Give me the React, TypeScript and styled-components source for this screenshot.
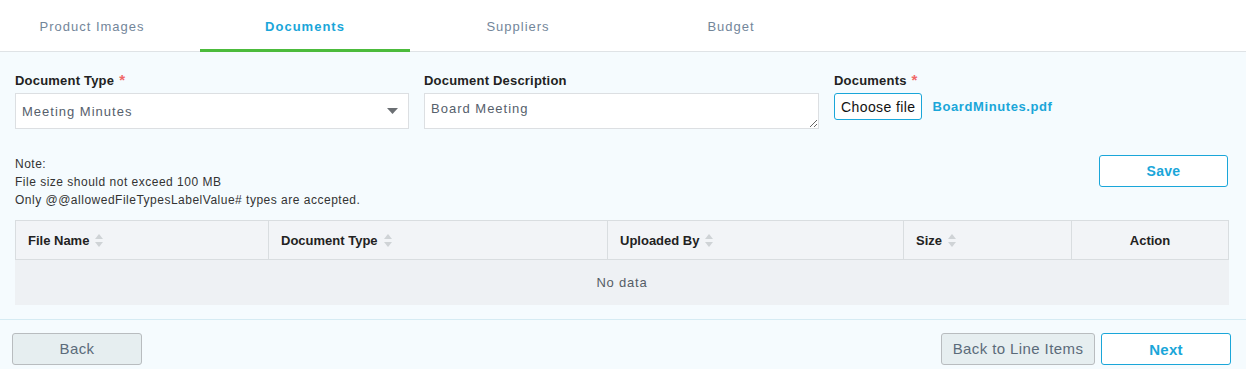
import styled, { createGlobalStyle } from "styled-components";

const GlobalStyle = createGlobalStyle`
  body {
    margin: 0;
    font-family: "Liberation Sans", Arial, sans-serif;
    background: #f5fbfe;
  }
  * {
    box-sizing: border-box;
  }
`;

const Page = styled.div`
  width: 1246px;
  height: 369px;
  overflow: hidden;
  background: #f5fbfe;
`;

const TabBar = styled.div`
  display: flex;
  gap: 3px;
  height: 52px;
  background: #ffffff;
  border-bottom: 1px solid #dfe3e6;
  margin-left: -13px;
`;

const Tab = styled.div<{ $active?: boolean }>`
  width: 210px;
  display: flex;
  align-items: center;
  justify-content: center;
  padding-top: 3px;
  font-size: 13px;
  letter-spacing: 1px;
  font-weight: ${(p) => (p.$active ? "bold" : "normal")};
  color: ${(p) => (p.$active ? "#1aa6d9" : "#73869a")};
  border-bottom: 3px solid ${(p) => (p.$active ? "#4cbb3c" : "transparent")};
  margin-bottom: -1px;
`;

const Body = styled.div`
  padding: 20px 15px 14px;
  border-bottom: 1px solid #d5ebf3;
`;

const FieldRow = styled.div`
  display: grid;
  grid-template-columns: 394px 395px 1fr;
  gap: 15px;
`;

const Field = styled.div`
  display: flex;
  flex-direction: column;
`;

const Label = styled.div`
  height: 18px;
  font-size: 13px;
  font-weight: bold;
  letter-spacing: 0.2px;
  color: #222;
  line-height: 18px;
  margin-bottom: 3px;
`;

const Required = styled.span`
  color: #f06868;
  font-size: 15px;
  line-height: 0;
  margin-left: 5px;
`;

const SelectBox = styled.div`
  height: 36px;
  width: 394px;
  background: #fff;
  border: 1px solid #dcdfe2;
  display: flex;
  align-items: center;
  justify-content: space-between;
  padding: 0 10px 0 6px;
  font-size: 13px;
  letter-spacing: 1px;
  color: #56606c;
`;

const TextArea = styled.textarea`
  height: 36px;
  width: 395px;
  background: #fff;
  border: 1px solid #dcdfe2;
  border-radius: 0;
  padding: 7px 6px;
  font-family: "Liberation Sans", Arial, sans-serif;
  font-size: 13px;
  letter-spacing: 1px;
  color: #56606c;
  resize: both;
  outline: none;
`;

const FileRow = styled.div`
  display: flex;
  align-items: center;
  gap: 10px;
  height: 27px;
`;

const FileButton = styled.button`
  height: 27px;
  padding: 0 6px;
  background: #fff;
  border: 1px solid #1aa6d9;
  border-radius: 3px;
  font-family: "Liberation Sans", Arial, sans-serif;
  font-size: 14px;
  letter-spacing: 0.4px;
  color: #111;
`;

const FileName = styled.span`
  font-size: 13px;
  font-weight: bold;
  letter-spacing: 0.6px;
  color: #1aa6d9;
`;

const NoteRow = styled.div`
  display: flex;
  justify-content: space-between;
  align-items: flex-start;
  margin-top: 26px;
`;

const Note = styled.div`
  font-size: 12px;
  letter-spacing: 0.5px;
  line-height: 18px;
  color: #333;
`;

const OutlineButton = styled.button<{ $w: number; $size: number }>`
  width: ${(p) => p.$w}px;
  height: 32px;
  background: #fff;
  border: 1px solid #1aa6d9;
  border-radius: 3px;
  font-family: "Liberation Sans", Arial, sans-serif;
  font-weight: bold;
  font-size: ${(p) => p.$size}px;
  letter-spacing: 0.3px;
  color: #1aa6d9;
`;

const SaveButton = styled(OutlineButton)`
  margin-right: 3px;
`;

const Table = styled.div`
  margin-top: 11px;
  width: 1214px;
`;

const HeadRow = styled.div`
  display: grid;
  grid-template-columns: 252px 339px 296px 168px 1fr;
  height: 40px;
  background: #f2f4f7;
  border: 1px solid #d9dde0;
`;

const HeadCell = styled.div<{ $center?: boolean }>`
  display: flex;
  align-items: center;
  justify-content: ${(p) => (p.$center ? "center" : "flex-start")};
  gap: 6px;
  padding-left: ${(p) => (p.$center ? "0" : "12px")};
  border-left: 1px solid #d9dde0;
  font-size: 13px;
  font-weight: bold;
  color: #222;
  &:first-child {
    border-left: none;
  }
`;

const EmptyRow = styled.div`
  height: 45px;
  background: #eef1f4;
  display: flex;
  align-items: center;
  justify-content: center;
  font-size: 13px;
  letter-spacing: 0.8px;
  color: #555d66;
`;

const Footer = styled.div`
  display: flex;
  align-items: center;
  padding: 13px 15px 0 12px;
  gap: 6px;
`;

const Spacer = styled.div`
  flex: 1;
`;

const GreyButton = styled.button<{ $w: number }>`
  width: ${(p) => p.$w}px;
  height: 32px;
  padding-bottom: 2px;
  background: #e6eef0;
  border: 1px solid #b8bcbf;
  border-radius: 3px;
  font-family: "Liberation Sans", Arial, sans-serif;
  font-size: 15px;
  letter-spacing: 0.4px;
  color: #5b6b7a;
`;

const SortIcon = () => (
  <svg width="8" height="13" viewBox="0 0 8 13">
    <path d="M4 0 L8 5 L0 5 Z" fill="#cfd3d6" />
    <path d="M0 8 L8 8 L4 13 Z" fill="#cfd3d6" />
  </svg>
);

const Caret = () => (
  <svg width="11" height="6" viewBox="0 0 11 6">
    <path d="M0 0 L11 0 L5.5 6 Z" fill="#6b6f73" />
  </svg>
);

const columns = [
  { name: "File Name", sort: true },
  { name: "Document Type", sort: true },
  { name: "Uploaded By", sort: true },
  { name: "Size", sort: true },
  { name: "Action", sort: false },
];

function App() {
  return (
    <Page>
      <GlobalStyle />
      <TabBar>
        <Tab>Product Images</Tab>
        <Tab $active>Documents</Tab>
        <Tab>Suppliers</Tab>
        <Tab>Budget</Tab>
      </TabBar>
      <Body>
        <FieldRow>
          <Field>
            <Label>
              Document Type<Required>*</Required>
            </Label>
            <SelectBox>
              <span>Meeting Minutes</span>
              <Caret />
            </SelectBox>
          </Field>
          <Field>
            <Label>Document Description</Label>
            <TextArea defaultValue="Board Meeting" />
          </Field>
          <Field>
            <Label>
              Documents<Required>*</Required>
            </Label>
            <FileRow>
              <FileButton>Choose file</FileButton>
              <FileName>BoardMinutes.pdf</FileName>
            </FileRow>
          </Field>
        </FieldRow>
        <NoteRow>
          <Note>
            Note:
            <br />
            File size should not exceed 100 MB
            <br />
            Only @@allowedFileTypesLabelValue# types are accepted.
          </Note>
          <SaveButton $w={129} $size={14}>
            Save
          </SaveButton>
        </NoteRow>
        <Table>
          <HeadRow>
            {columns.map((c) => (
              <HeadCell key={c.name} $center={!c.sort}>
                {c.name}
                {c.sort ? <SortIcon /> : null}
              </HeadCell>
            ))}
          </HeadRow>
          <EmptyRow>No data</EmptyRow>
        </Table>
      </Body>
      <Footer>
        <GreyButton $w={130}>Back</GreyButton>
        <Spacer />
        <GreyButton $w={154}>Back to Line Items</GreyButton>
        <OutlineButton $w={130} $size={15}>
          Next
        </OutlineButton>
      </Footer>
    </Page>
  );
}

export default App;
